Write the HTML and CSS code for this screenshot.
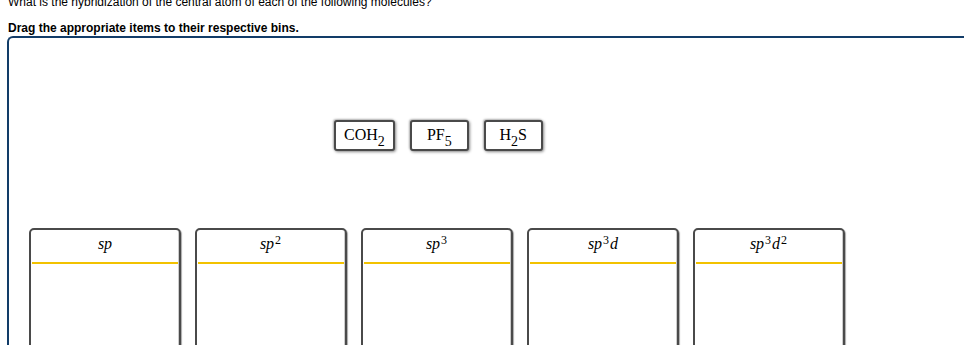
FILE: index.html
```html
<!DOCTYPE html>
<html lang="en">
<head>
  <meta charset="UTF-8">
  <title>Hybridization bins</title>
  <link rel="stylesheet" href="styles.css">
</head>
<body>
  <div class="page">
    <p class="question">What is the hybridization of the central atom of each of the following molecules?</p>
    <p class="prompt">Drag the appropriate items to their respective bins.</p>

    <div class="board">
      <div class="tiles">
        <div class="tile">COH<sub>2</sub></div>
        <div class="tile">PF<sub>5</sub></div>
        <div class="tile">H<sub>2</sub>S</div>
      </div>

      <div class="bins">
        <div class="bin"><div class="bin-head"><i>sp</i></div></div>
        <div class="bin"><div class="bin-head"><i>sp</i><sup>2</sup></div></div>
        <div class="bin"><div class="bin-head"><i>sp</i><sup>3</sup></div></div>
        <div class="bin"><div class="bin-head"><i>sp</i><sup>3</sup><i>d</i></div></div>
        <div class="bin"><div class="bin-head"><i>sp</i><sup>3</sup><i>d</i><sup>2</sup></div></div>
      </div>
    </div>
  </div>
</body>
</html>
```

FILE: styles.css
```css
body {
  margin: 0;
  font-family: "Liberation Sans", Arial, sans-serif;
  font-size: 12px;
  color: #000;
  overflow: hidden;
}
.page {
  margin-top: -5px;
  width: 1040px;
}
.question {
  margin: 0 0 0 8px;
  line-height: 14px;
}
.prompt {
  margin: 12px 0 0 8px;
  font-weight: bold;
  line-height: 14px;
}
.board {
  margin: 1px 0 0 7px;
  border: 1px solid #123c68;
  border-width: 2px 0 0 2px;
  border-top-left-radius: 6px;
  height: 330px;
  padding: 82px 0 0 20px;
}
.tiles {
  display: flex;
  gap: 15px;
  padding-left: 305px;
}
.tile {
  font-family: "Liberation Serif", "Times New Roman", serif;
  font-size: 16px;
  height: 27px;
  min-width: 39px;
  text-align: center;
  line-height: 26px;
  padding: 0 8px;
  border: 2px solid #4a4a4a;
  border-radius: 3px;
  box-shadow: 1px 1px 3px #888, -1px -1px 2px #bbb;
  background: #fff;
}
.tile sub {
  font-size: 14px;
  vertical-align: -6px;
  line-height: 0;
}
.bins {
  display: flex;
  gap: 14px;
  margin-top: 77px;
}
.bin {
  width: 148px;
  height: 140px;
  border: 2px solid #4a4a4a;
  border-radius: 5px;
  box-shadow: 1px 1px 1px #aaa, inset -1px -1px 0 #ccc;
}
.bin-head {
  height: 32px;
  margin: 0 1px;
  border-bottom: 2px solid #f2c200;
  text-align: center;
  font-family: "Liberation Serif", "Times New Roman", serif;
  font-size: 16px;
  line-height: 28px;
}
.bin-head sup {
  font-size: 12px;
  vertical-align: 5px;
  line-height: 0;
  padding: 0 1px;
}
```
